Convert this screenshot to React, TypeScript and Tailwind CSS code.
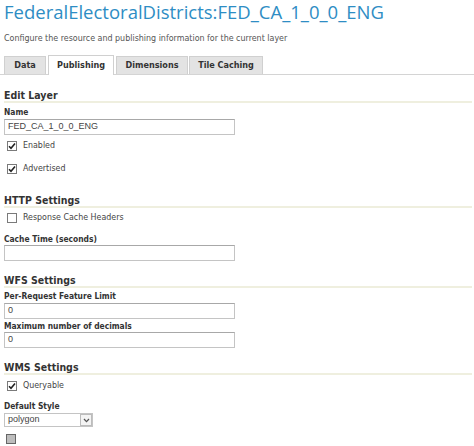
import React from "react";

const font = { fontFamily: '"DejaVu Sans Condensed", "DejaVu Sans", Verdana, sans-serif' };
const arial = { fontFamily: '"Liberation Sans", Arial, sans-serif' };

function Check({ checked }: { checked: boolean }) {
  return (
    <span className="inline-flex w-[10px] h-[10px] border border-[#7a7a7a] bg-white items-center justify-center shrink-0">
      {checked && (
        <svg width="8" height="8" viewBox="0 0 8 8">
          <path d="M1 4.2 L3 6.3 L7 1.5" fill="none" stroke="#222" strokeWidth="1.6" />
        </svg>
      )}
    </span>
  );
}

function CheckRow({ checked, label, h }: { checked: boolean; label: string; h: string }) {
  return (
    <div className={`flex items-center pl-[3px] ${h}`}>
      <Check checked={checked} />
      <span className="ml-[6px] text-[8.8px] text-[#444]">{label}</span>
    </div>
  );
}

function Heading({ children, pt }: { children: React.ReactNode; pt: string }) {
  return (
    <div className={pt}>
      <div className="h-[18px] pt-[5px] border-b-2 border-[#efefdf] flex items-center text-[10.5px] font-bold text-[#333] mr-[2px]">
        {children}
      </div>
    </div>
  );
}

function Label({ children, pt }: { children: React.ReactNode; pt: string }) {
  return (
    <div className={pt}>
      <div className="text-[8.4px] font-bold text-[#333] leading-[10px]">{children}</div>
    </div>
  );
}

function Input({ value, pt }: { value: string; pt: string }) {
  return (
    <div className={pt}>
      <div className="w-[231px] h-[16px] border border-[#c4c4c4] border-t-[#a8a8a8] bg-white flex items-center pl-[3px] text-[9px] text-[#444]" style={arial}>
        {value}
      </div>
    </div>
  );
}

function Tab({ label, w, active }: { label: string; w: string; active?: boolean }) {
  return (
    <div
      className={`${w} ${active ? "h-[20px] mb-[-1px] bg-white" : "h-[18px] bg-[#e3e3e3]"} border border-b-0 border-[#d0d0d0] flex items-center justify-center text-[9px] font-bold text-[#333]`}
    >
      {label}
    </div>
  );
}

export default function App() {
  return (
    <div className="w-[474px] h-[446px] bg-white overflow-hidden" style={font}>
      <div className="pl-1 h-[24px] text-[18.5px] leading-[24px] text-[#2e8dc4]" style={{ fontFamily: '"Open Sans", sans-serif' }}>
        FederalElectoralDistricts:FED_CA_1_0_0_ENG
      </div>
      <div className="pl-1 pt-[7px] h-[30px] text-[8.85px] leading-[14px] text-[#555]">
        Configure the resource and publishing information for the current layer
      </div>
      <div className="flex items-end h-[21px] border-b border-[#d4d4d4] pl-1">
        <Tab label="Data" w="w-[42px] mr-[2px]" />
        <Tab label="Publishing" w="w-[66px] mr-[2px]" active />
        <Tab label="Dimensions" w="w-[72px] mr-[1px]" />
        <Tab label="Tile Caching" w="w-[74px]" />
      </div>
      <div className="pl-1 pt-[1px]">
        <Heading pt="pt-[9px]">Edit Layer</Heading>
        <Label pt="pt-[4px]">Name</Label>
        <Input pt="pt-[2px]" value="FED_CA_1_0_0_ENG" />
        <CheckRow checked label="Enabled" h="h-[22px]" />
        <CheckRow checked label="Advertised" h="h-[24px]" />
        <Heading pt="pt-[9px]">HTTP Settings</Heading>
        <CheckRow checked={false} label="Response Cache Headers" h="h-[20px]" />
        <Label pt="pt-[6px]">Cache Time (seconds)</Label>
        <Input pt="pt-[1px]" value="" />
        <Heading pt="pt-[9px]">WFS Settings</Heading>
        <Label pt="pt-[3px]">Per-Request Feature Limit</Label>
        <Input pt="pt-[2px]" value="0" />
        <Label pt="pt-[2px]">Maximum number of decimals</Label>
        <Input pt="pt-[1px]" value="0" />
        <Heading pt="pt-[9px]">WMS Settings</Heading>
        <CheckRow checked label="Queryable" h="h-[22px]" />
        <Label pt="pt-[4px]">Default Style</Label>
        <div className="pt-[2px]">
          <div className="w-[89px] h-[14px] border border-[#c4c4c4] flex items-center bg-white">
            <span className="flex-1 pl-[3px] text-[9px] text-[#444]" style={arial}>polygon</span>
            <span className="w-[12px] h-[12px] border border-[#bcbcbc] bg-[#f4f4f4] flex items-center justify-center">
              <svg width="7" height="5" viewBox="0 0 7 5"><path d="M1 1 L3.5 3.6 L6 1" fill="none" stroke="#555" strokeWidth="1.3" /></svg>
            </span>
          </div>
        </div>
        <div className="pt-[7px] pl-[2px]">
          <div className="w-[10px] h-[10px] bg-[#bdbdbd] border border-[#666]" />
        </div>
      </div>
    </div>
  );
}
